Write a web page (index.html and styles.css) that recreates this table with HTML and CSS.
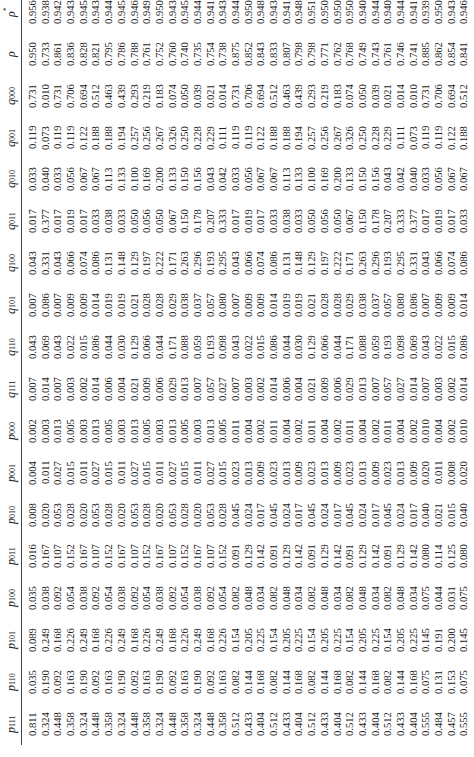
FILE: index.html
```html
<!DOCTYPE html>
<html lang="en">
<head>
<meta charset="utf-8">
<title>Table</title>
<link rel="stylesheet" href="styles.css">
</head>
<body>
<div class="sheet">
<div class="r h"><span><i>p</i><sub>111</sub></span><span><i>p</i><sub>110</sub></span><span><i>p</i><sub>101</sub></span><span><i>p</i><sub>100</sub></span><span><i>p</i><sub>011</sub></span><span><i>p</i><sub>010</sub></span><span><i>p</i><sub>001</sub></span><span><i>p</i><sub>000</sub></span><span><i>q</i><sub>111</sub></span><span><i>q</i><sub>110</sub></span><span><i>q</i><sub>101</sub></span><span><i>q</i><sub>100</sub></span><span><i>q</i><sub>011</sub></span><span><i>q</i><sub>010</sub></span><span><i>q</i><sub>001</sub></span><span><i>q</i><sub>000</sub></span><span><i>ρ</i></span><span><i>ρ</i><sup>*</sup></span></div>
<div class="r"><span>0.811</span><span>0.035</span><span>0.089</span><span>0.035</span><span>0.016</span><span>0.008</span><span>0.004</span><span>0.002</span><span>0.007</span><span>0.043</span><span>0.007</span><span>0.043</span><span>0.017</span><span>0.033</span><span>0.119</span><span>0.731</span><span>0.950</span><span>0.956</span></div>
<div class="r"><span>0.324</span><span>0.190</span><span>0.249</span><span>0.038</span><span>0.167</span><span>0.020</span><span>0.011</span><span>0.003</span><span>0.014</span><span>0.069</span><span>0.086</span><span>0.331</span><span>0.377</span><span>0.040</span><span>0.073</span><span>0.010</span><span>0.733</span><span>0.938</span></div>
<div class="r"><span>0.448</span><span>0.092</span><span>0.168</span><span>0.092</span><span>0.107</span><span>0.053</span><span>0.027</span><span>0.013</span><span>0.007</span><span>0.043</span><span>0.007</span><span>0.043</span><span>0.017</span><span>0.033</span><span>0.119</span><span>0.731</span><span>0.861</span><span>0.942</span></div>
<div class="r"><span>0.358</span><span>0.163</span><span>0.226</span><span>0.054</span><span>0.152</span><span>0.028</span><span>0.015</span><span>0.005</span><span>0.003</span><span>0.022</span><span>0.009</span><span>0.066</span><span>0.019</span><span>0.056</span><span>0.119</span><span>0.706</span><span>0.836</span><span>0.943</span></div>
<div class="r"><span>0.324</span><span>0.190</span><span>0.249</span><span>0.038</span><span>0.167</span><span>0.020</span><span>0.011</span><span>0.003</span><span>0.002</span><span>0.015</span><span>0.009</span><span>0.074</span><span>0.017</span><span>0.067</span><span>0.122</span><span>0.694</span><span>0.828</span><span>0.945</span></div>
<div class="r"><span>0.448</span><span>0.092</span><span>0.168</span><span>0.092</span><span>0.107</span><span>0.053</span><span>0.027</span><span>0.013</span><span>0.014</span><span>0.086</span><span>0.014</span><span>0.086</span><span>0.033</span><span>0.067</span><span>0.188</span><span>0.512</span><span>0.821</span><span>0.943</span></div>
<div class="r"><span>0.358</span><span>0.163</span><span>0.226</span><span>0.054</span><span>0.152</span><span>0.028</span><span>0.015</span><span>0.005</span><span>0.006</span><span>0.044</span><span>0.019</span><span>0.131</span><span>0.038</span><span>0.113</span><span>0.188</span><span>0.463</span><span>0.795</span><span>0.944</span></div>
<div class="r"><span>0.324</span><span>0.190</span><span>0.249</span><span>0.038</span><span>0.167</span><span>0.020</span><span>0.011</span><span>0.003</span><span>0.004</span><span>0.030</span><span>0.019</span><span>0.148</span><span>0.033</span><span>0.133</span><span>0.194</span><span>0.439</span><span>0.786</span><span>0.945</span></div>
<div class="r"><span>0.448</span><span>0.092</span><span>0.168</span><span>0.092</span><span>0.107</span><span>0.053</span><span>0.027</span><span>0.013</span><span>0.021</span><span>0.129</span><span>0.021</span><span>0.129</span><span>0.050</span><span>0.100</span><span>0.257</span><span>0.293</span><span>0.788</span><span>0.946</span></div>
<div class="r"><span>0.358</span><span>0.163</span><span>0.226</span><span>0.054</span><span>0.152</span><span>0.028</span><span>0.015</span><span>0.005</span><span>0.009</span><span>0.066</span><span>0.028</span><span>0.197</span><span>0.056</span><span>0.169</span><span>0.256</span><span>0.219</span><span>0.761</span><span>0.949</span></div>
<div class="r"><span>0.324</span><span>0.190</span><span>0.249</span><span>0.038</span><span>0.167</span><span>0.020</span><span>0.011</span><span>0.003</span><span>0.006</span><span>0.044</span><span>0.028</span><span>0.222</span><span>0.050</span><span>0.200</span><span>0.267</span><span>0.183</span><span>0.752</span><span>0.950</span></div>
<div class="r"><span>0.448</span><span>0.092</span><span>0.168</span><span>0.092</span><span>0.107</span><span>0.053</span><span>0.027</span><span>0.013</span><span>0.029</span><span>0.171</span><span>0.029</span><span>0.171</span><span>0.067</span><span>0.133</span><span>0.326</span><span>0.074</span><span>0.760</span><span>0.943</span></div>
<div class="r"><span>0.358</span><span>0.163</span><span>0.226</span><span>0.054</span><span>0.152</span><span>0.028</span><span>0.015</span><span>0.005</span><span>0.013</span><span>0.088</span><span>0.038</span><span>0.263</span><span>0.150</span><span>0.150</span><span>0.250</span><span>0.050</span><span>0.740</span><span>0.945</span></div>
<div class="r"><span>0.324</span><span>0.190</span><span>0.249</span><span>0.038</span><span>0.167</span><span>0.020</span><span>0.011</span><span>0.003</span><span>0.007</span><span>0.059</span><span>0.037</span><span>0.296</span><span>0.178</span><span>0.156</span><span>0.228</span><span>0.039</span><span>0.735</span><span>0.944</span></div>
<div class="r"><span>0.448</span><span>0.092</span><span>0.168</span><span>0.092</span><span>0.107</span><span>0.053</span><span>0.027</span><span>0.013</span><span>0.057</span><span>0.193</span><span>0.057</span><span>0.193</span><span>0.207</span><span>0.043</span><span>0.229</span><span>0.021</span><span>0.754</span><span>0.941</span></div>
<div class="r"><span>0.358</span><span>0.163</span><span>0.226</span><span>0.054</span><span>0.152</span><span>0.028</span><span>0.015</span><span>0.005</span><span>0.027</span><span>0.098</span><span>0.080</span><span>0.295</span><span>0.333</span><span>0.042</span><span>0.111</span><span>0.014</span><span>0.738</span><span>0.943</span></div>
<div class="r"><span>0.512</span><span>0.082</span><span>0.154</span><span>0.082</span><span>0.091</span><span>0.045</span><span>0.023</span><span>0.011</span><span>0.007</span><span>0.043</span><span>0.007</span><span>0.043</span><span>0.017</span><span>0.033</span><span>0.119</span><span>0.731</span><span>0.875</span><span>0.944</span></div>
<div class="r"><span>0.433</span><span>0.144</span><span>0.205</span><span>0.048</span><span>0.129</span><span>0.024</span><span>0.013</span><span>0.004</span><span>0.003</span><span>0.022</span><span>0.009</span><span>0.066</span><span>0.019</span><span>0.056</span><span>0.119</span><span>0.706</span><span>0.852</span><span>0.950</span></div>
<div class="r"><span>0.404</span><span>0.168</span><span>0.225</span><span>0.034</span><span>0.142</span><span>0.017</span><span>0.009</span><span>0.002</span><span>0.002</span><span>0.015</span><span>0.009</span><span>0.074</span><span>0.017</span><span>0.067</span><span>0.122</span><span>0.694</span><span>0.843</span><span>0.948</span></div>
<div class="r"><span>0.512</span><span>0.082</span><span>0.154</span><span>0.082</span><span>0.091</span><span>0.045</span><span>0.023</span><span>0.011</span><span>0.014</span><span>0.086</span><span>0.014</span><span>0.086</span><span>0.033</span><span>0.067</span><span>0.188</span><span>0.512</span><span>0.833</span><span>0.943</span></div>
<div class="r"><span>0.433</span><span>0.144</span><span>0.205</span><span>0.048</span><span>0.129</span><span>0.024</span><span>0.013</span><span>0.004</span><span>0.006</span><span>0.044</span><span>0.019</span><span>0.131</span><span>0.038</span><span>0.113</span><span>0.188</span><span>0.463</span><span>0.807</span><span>0.941</span></div>
<div class="r"><span>0.404</span><span>0.168</span><span>0.225</span><span>0.034</span><span>0.142</span><span>0.017</span><span>0.009</span><span>0.002</span><span>0.004</span><span>0.030</span><span>0.019</span><span>0.148</span><span>0.033</span><span>0.133</span><span>0.194</span><span>0.439</span><span>0.798</span><span>0.948</span></div>
<div class="r"><span>0.512</span><span>0.082</span><span>0.154</span><span>0.082</span><span>0.091</span><span>0.045</span><span>0.023</span><span>0.011</span><span>0.021</span><span>0.129</span><span>0.021</span><span>0.129</span><span>0.050</span><span>0.100</span><span>0.257</span><span>0.293</span><span>0.798</span><span>0.951</span></div>
<div class="r"><span>0.433</span><span>0.144</span><span>0.205</span><span>0.048</span><span>0.129</span><span>0.024</span><span>0.013</span><span>0.004</span><span>0.009</span><span>0.066</span><span>0.028</span><span>0.197</span><span>0.056</span><span>0.169</span><span>0.256</span><span>0.219</span><span>0.771</span><span>0.950</span></div>
<div class="r"><span>0.404</span><span>0.168</span><span>0.225</span><span>0.034</span><span>0.142</span><span>0.017</span><span>0.009</span><span>0.002</span><span>0.006</span><span>0.044</span><span>0.028</span><span>0.222</span><span>0.050</span><span>0.200</span><span>0.267</span><span>0.183</span><span>0.762</span><span>0.950</span></div>
<div class="r"><span>0.512</span><span>0.082</span><span>0.154</span><span>0.082</span><span>0.091</span><span>0.045</span><span>0.023</span><span>0.011</span><span>0.029</span><span>0.171</span><span>0.029</span><span>0.171</span><span>0.067</span><span>0.133</span><span>0.326</span><span>0.074</span><span>0.768</span><span>0.950</span></div>
<div class="r"><span>0.433</span><span>0.144</span><span>0.205</span><span>0.048</span><span>0.129</span><span>0.024</span><span>0.013</span><span>0.004</span><span>0.013</span><span>0.088</span><span>0.038</span><span>0.263</span><span>0.150</span><span>0.150</span><span>0.250</span><span>0.050</span><span>0.749</span><span>0.940</span></div>
<div class="r"><span>0.404</span><span>0.168</span><span>0.225</span><span>0.034</span><span>0.142</span><span>0.017</span><span>0.009</span><span>0.002</span><span>0.007</span><span>0.059</span><span>0.037</span><span>0.296</span><span>0.178</span><span>0.156</span><span>0.228</span><span>0.039</span><span>0.743</span><span>0.944</span></div>
<div class="r"><span>0.512</span><span>0.082</span><span>0.154</span><span>0.082</span><span>0.091</span><span>0.045</span><span>0.023</span><span>0.011</span><span>0.057</span><span>0.193</span><span>0.057</span><span>0.193</span><span>0.207</span><span>0.043</span><span>0.229</span><span>0.021</span><span>0.761</span><span>0.940</span></div>
<div class="r"><span>0.433</span><span>0.144</span><span>0.205</span><span>0.048</span><span>0.129</span><span>0.024</span><span>0.013</span><span>0.004</span><span>0.027</span><span>0.098</span><span>0.080</span><span>0.295</span><span>0.333</span><span>0.042</span><span>0.111</span><span>0.014</span><span>0.746</span><span>0.944</span></div>
<div class="r"><span>0.404</span><span>0.168</span><span>0.225</span><span>0.034</span><span>0.142</span><span>0.017</span><span>0.009</span><span>0.002</span><span>0.014</span><span>0.069</span><span>0.086</span><span>0.331</span><span>0.377</span><span>0.040</span><span>0.073</span><span>0.010</span><span>0.741</span><span>0.941</span></div>
<div class="r"><span>0.555</span><span>0.075</span><span>0.145</span><span>0.075</span><span>0.080</span><span>0.040</span><span>0.020</span><span>0.010</span><span>0.007</span><span>0.043</span><span>0.007</span><span>0.043</span><span>0.017</span><span>0.033</span><span>0.119</span><span>0.731</span><span>0.885</span><span>0.939</span></div>
<div class="r"><span>0.484</span><span>0.131</span><span>0.191</span><span>0.044</span><span>0.114</span><span>0.021</span><span>0.011</span><span>0.004</span><span>0.003</span><span>0.022</span><span>0.009</span><span>0.066</span><span>0.019</span><span>0.056</span><span>0.119</span><span>0.706</span><span>0.862</span><span>0.950</span></div>
<div class="r"><span>0.457</span><span>0.153</span><span>0.200</span><span>0.031</span><span>0.125</span><span>0.015</span><span>0.008</span><span>0.002</span><span>0.002</span><span>0.015</span><span>0.009</span><span>0.074</span><span>0.017</span><span>0.067</span><span>0.122</span><span>0.694</span><span>0.854</span><span>0.943</span></div>
<div class="r"><span>0.555</span><span>0.075</span><span>0.145</span><span>0.075</span><span>0.080</span><span>0.040</span><span>0.020</span><span>0.010</span><span>0.014</span><span>0.086</span><span>0.014</span><span>0.086</span><span>0.033</span><span>0.067</span><span>0.188</span><span>0.512</span><span>0.841</span><span>0.946</span></div>
</div>
</body>
</html>
```

FILE: styles.css
```css
* {
  box-sizing: border-box;
}

html,
body {
  margin: 0;
  padding: 0;
  background: #ffffff;
  overflow: hidden;
}

/* The table is typeset sideways: rows run left to right, cells read bottom to top. */
.sheet {
  width: 474px;
  height: 757px;
  overflow: hidden;
  writing-mode: vertical-rl;
  transform: rotate(180deg);
  padding-top: 12px;
  font-family: "Liberation Serif", "DejaVu Serif", serif;
  font-size: 10.6px;
  color: #222222;
}

.r {
  display: flex;
  block-size: 12.7px;
  line-height: 12.7px;
  white-space: nowrap;
}

.r span {
  flex: none;
  inline-size: 41.9px;
  text-align: center;
}

.h {
  block-size: 22px;
  line-height: 21px;
  border-block-end: 1px solid #444444;
  margin-block-end: 5px;
}

.h i {
  font-style: italic;
  font-size: 12px;
}

.h sub {
  font-size: 8px;
  vertical-align: -2px;
  line-height: 0;
}

.h sup {
  font-size: 8px;
  vertical-align: 4px;
  line-height: 0;
}
```
